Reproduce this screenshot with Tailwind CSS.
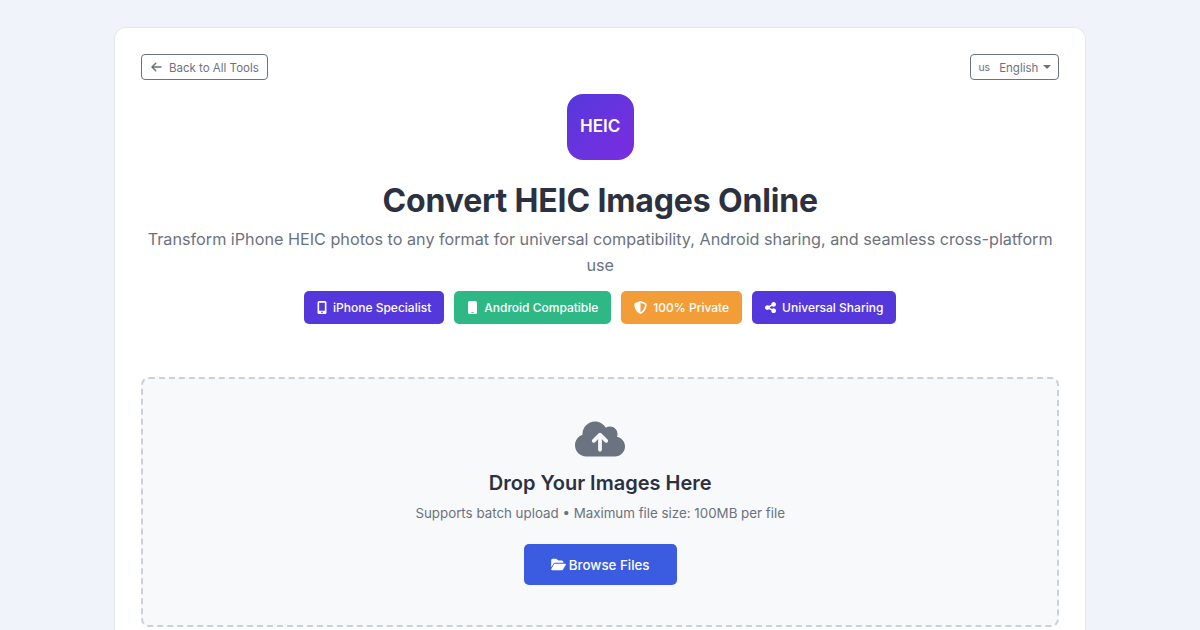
<!DOCTYPE html>
<html lang="en">
<head>
    <meta charset="UTF-8">
    <title>Convert HEIC Images Online</title>
    <script src="https://cdn.jsdelivr.net/npm/@tailwindcss/browser@4"></script>
</head>
<body class="bg-[#f0f3f9] h-[630px] overflow-hidden font-['Inter',sans-serif] text-[#2b3140]">
    <div class="ml-[113.6px] mt-[27px] w-[972.8px] h-[603px] overflow-hidden bg-white rounded-t-[12px] border border-b-0 border-[#e5e7eb] pl-[26.4px] pr-[26px] pt-[26px]">
        <div class="flex justify-between items-start h-[26px]">
            <a href="#" class="flex items-center gap-[7px] h-[26px] pl-[9px] pr-[8px] border border-[#6b7280] rounded-[4px] text-[11.5px] text-[#6b7280]">
                <svg width="11" height="12" viewBox="0 0 448 512"><path fill="#6b7280" d="M9.400 233.400c-12.500 12.500-12.500 32.800 0 45.300l160 160c12.500 12.500 32.800 12.500 45.300 0s12.500-32.800 0-45.300L109.300 288 416 288c17.700 0 32-14.300 32-32s-14.300-32-32-32l-306.700 0L214.600 118.600c12.500-12.500 12.500-32.800 0-45.300s-32.800-12.500-45.300 0l-160 160z"/></svg>
                <span class="pt-[4px]">Back to All Tools</span>
            </a>
            <div class="flex items-center w-[89px] h-[26px] pl-[7px] pr-[6px] border border-[#6b7280] rounded-[4px] text-[11.5px] text-[#6b7280]">
                <span class="text-[10.5px] mr-[9px] pt-[2px]">us</span><span class="pt-[4px]">English</span>
                <span class="ml-[5px] w-0 h-0 border-x-[4px] border-x-transparent border-t-[4px] border-t-[#6b7280]"></span>
            </div>
        </div>
        <div class="mt-[14px] mx-auto w-[67px] h-[66px] rounded-[16px] bg-gradient-to-br from-[#5438dc] to-[#7c2be0] flex items-center justify-center text-white font-semibold text-[17px]">HEIC</div>
        <h1 class="mt-[19px] text-center text-[32px] leading-[44px] font-bold tracking-[-0.15px]">Convert HEIC Images Online</h1>
        <p class="mt-[3px] text-center text-[16.2px] leading-[26px] text-[#6b7280]">Transform iPhone HEIC photos to any format for universal compatibility, Android sharing, and seamless cross-platform use</p>
        <div class="mt-[13px] flex justify-center gap-[10px] text-white text-[12px] font-medium">
            <span class="flex items-center gap-[6px] h-[33px] px-[13px] rounded-[5px] bg-[#5438dc]">
                <svg width="10" height="13" viewBox="0 0 384 512"><path fill="#fff" d="M16 64C16 28.700 44.700 0 80 0H304c35.300 0 64 28.700 64 64V448c0 35.300-28.700 64-64 64H80c-35.300 0-64-28.700-64-64V64zM224 448a32 32 0 1 0 -64 0 32 32 0 1 0 64 0zM304 64H80V384H304V64z"/></svg>
                iPhone Specialist
            </span>
            <span class="flex items-center gap-[6px] h-[33px] px-[13px] rounded-[5px] bg-[#2eb886]">
                <svg width="11" height="13" viewBox="0 0 384 512"><path fill="#fff" d="M80 0C44.700 0 16 28.700 16 64V448c0 35.300 28.700 64 64 64H304c35.300 0 64-28.700 64-64V64c0-35.300-28.700-64-64-64H80zm80 432h64c8.800 0 16 7.200 16 16s-7.200 16-16 16H160c-8.800 0-16-7.200-16-16s7.200-16 16-16z"/></svg>
                Android Compatible
            </span>
            <span class="flex items-center gap-[6px] h-[33px] px-[13px] rounded-[5px] bg-[#f29d38]">
                <svg width="13" height="13" viewBox="0 0 512 512"><path fill="#fff" d="M256 0c4.600 0 9.200 1 13.400 2.900L457.700 82.800c22 9.300 38.400 31 38.300 57.200c-.5 99.200-41.300 280.700-213.600 363.200c-16.700 8-36.100 8-52.800 0C57.300 420.700 16.500 239.200 16 140c-.1-26.200 16.300-47.900 38.300-57.200L242.700 2.900C246.800 1 251.400 0 256 0zm0 66.800V444.800C394 378 431.100 230.100 432 141.400L256 66.800z"/></svg>
                100% Private
            </span>
            <span class="flex items-center gap-[6px] h-[33px] px-[13px] rounded-[5px] bg-[#5438dc]">
                <svg width="11" height="13" viewBox="0 0 448 512"><path fill="#fff" d="M352 224c53 0 96-43 96-96s-43-96-96-96s-96 43-96 96c0 4 .2 8 .7 11.900l-94.100 47C145.400 170.200 121.900 160 96 160c-53 0-96 43-96 96s43 96 96 96c25.900 0 49.400-10.200 66.600-26.900l94.100 47c-.5 3.900-.7 7.800-.7 11.900c0 53 43 96 96 96s96-43 96-96s-43-96-96-96c-25.900 0-49.400 10.200-66.600 26.900l-94.100-47c.5-3.900 .7-7.800 .7-11.900s-.2-8-.7-11.900l94.100-47C302.600 213.800 326.100 224 352 224z"/></svg>
                Universal Sharing
            </span>
        </div>
        <div class="mt-[53px] h-[250px] rounded-[8px] border-2 border-dashed border-[#ccd0d9] bg-[#f8f9fb] flex flex-col items-center pt-[40px]">
            <svg width="50" height="40" viewBox="0 0 640 512"><path fill="#6b7280" d="M144 480C64.500 480 0 415.500 0 336c0-62.800 40.200-116.200 96.200-135.900c-.1-2.700-.2-5.400-.2-8.100c0-88.400 71.600-160 160-160c59.300 0 111 32.200 138.700 80.200C409.900 102 428.300 96 448 96c53 0 96 43 96 96c0 12.200-2.300 23.800-6.400 34.600C596 238.400 640 290.100 640 352c0 70.700-57.300 128-128 128H144zm79-217c-9.400 9.400-9.400 24.600 0 33.900s24.600 9.400 33.900 0l39-39V392c0 13.300 10.700 24 24 24s24-10.700 24-24V257.900l39 39c9.400 9.400 24.600 9.400 33.900 0s9.400-24.600 0-33.900l-80-80c-9.400-9.400-24.600-9.400-33.900 0l-80 80z"/></svg>
            <h2 class="mt-[9px] text-[20px] leading-[30px] font-semibold">Drop Your Images Here</h2>
            <p class="mt-[5px] text-[13.33px] leading-[20px] text-[#6b7280]">Supports batch upload • Maximum file size: 100MB per file</p>
            <button class="mt-[21px] flex items-center gap-[3px] h-[41px] w-[153px] justify-center rounded-[5px] bg-[#3b5be0] text-white text-[13.33px] font-medium">
                <svg width="15" height="13" viewBox="0 0 576 512"><path fill="#fff" d="M88.700 223.800L0 375.800V96C0 60.700 28.700 32 64 32H181.500c17 0 33.300 6.700 45.300 18.700l26.500 26.500c12 12 28.300 18.700 45.300 18.700H416c35.300 0 64 28.700 64 64v32H144c-22.800 0-43.800 12.100-55.300 31.800zm27.600 16.100C122.100 230 132.600 224 144 224H544c11.500 0 22 6.100 27.700 16.100s5.700 22.200-.1 32.100l-112 192C453.900 474 443.400 480 432 480H32c-11.500 0-22-6.100-27.700-16.100s-5.700-22.200 .1-32.100l112-192z"/></svg>
                <span class="pt-[2px]">Browse Files</span>
            </button>
        </div>
    </div>
</body>
</html>
